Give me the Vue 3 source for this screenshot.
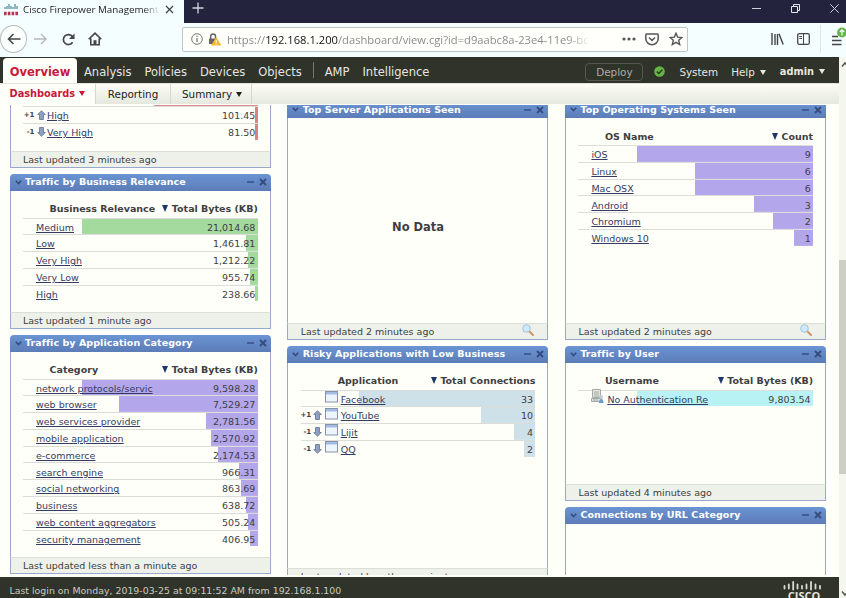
<script setup>
// --- Navigation ---
const menu = ['Analysis', 'Policies', 'Devices', 'Objects']

// --- Dashboard widgets, one list per column ---
// bar is the width of the coloured bar in px
const columns = [
  [
    {
      title: '',
      color: 'red',
      rows: [
        { name: '', value: '', bar: 104 },
        { rank: '+1', name: 'High', value: '101.45', bar: 3 },
        { rank: '-1', name: 'Very High', value: '81.50', bar: 3 },
      ],
      updated: '3 minutes ago',
      size: 'w-first',
    },
    {
      title: 'Traffic by Business Relevance',
      color: 'green',
      head: ['Business Relevance', 'Total Bytes (KB)'],
      rows: [
        { name: 'Medium', value: '21,014.68', bar: 176 },
        { name: 'Low', value: '1,461.81', bar: 12 },
        { name: 'Very High', value: '1,212.22', bar: 10 },
        { name: 'Very Low', value: '955.74', bar: 8 },
        { name: 'High', value: '238.66', bar: 3 },
      ],
      updated: '1 minute ago',
      size: 'w-relevance',
    },
    {
      title: 'Traffic by Application Category',
      color: 'purple',
      head: ['Category', 'Total Bytes (KB)'],
      rows: [
        { name: 'network protocols/servic', value: '9,598.28', bar: 176 },
        { name: 'web browser', value: '7,529.27', bar: 139 },
        { name: 'web services provider', value: '2,781.56', bar: 52 },
        { name: 'mobile application', value: '2,570.92', bar: 47 },
        { name: 'e-commerce', value: '2,174.53', bar: 40 },
        { name: 'search engine', value: '966.31', bar: 19 },
        { name: 'social networking', value: '863.69', bar: 17 },
        { name: 'business', value: '638.72', bar: 12 },
        { name: 'web content aggregators', value: '505.24', bar: 10 },
        { name: 'security management', value: '406.95', bar: 8 },
      ],
      updated: 'less than a minute ago',
      size: 'w-category',
    },
  ],
  [
    { title: 'Top Server Applications Seen', empty: 'No Data', updated: '2 minutes ago', search: true, size: 'w-top' },
    {
      title: 'Risky Applications with Low Business',
      color: 'blue',
      head: ['Application', 'Total Connections'],
      icon: 'app',
      rows: [
        { name: 'Facebook', value: '33', bar: 176 },
        { rank: '+1', name: 'YouTube', value: '10', bar: 54 },
        { rank: '-1', name: 'Lijit', value: '4', bar: 21 },
        { rank: '-1', name: 'QQ', value: '2', bar: 11 },
      ],
      updated: 'less than a minute ago',
      size: 'w-risky',
    },
  ],
  [
    {
      title: 'Top Operating Systems Seen',
      color: 'purple',
      head: ['OS Name', 'Count'],
      rows: [
        { name: 'iOS', value: '9', bar: 176 },
        { name: 'Linux', value: '6', bar: 118 },
        { name: 'Mac OSX', value: '6', bar: 118 },
        { name: 'Android', value: '3', bar: 59 },
        { name: 'Chromium', value: '2', bar: 40 },
        { name: 'Windows 10', value: '1', bar: 19 },
      ],
      updated: '2 minutes ago',
      search: true,
      size: 'w-top',
    },
    {
      title: 'Traffic by User',
      color: 'cyan',
      head: ['Username', 'Total Bytes (KB)'],
      icon: 'user',
      rows: [{ name: 'No Authentication Re', value: '9,803.54', bar: 176 }],
      updated: '4 minutes ago',
      size: 'w-user',
    },
    { title: 'Connections by URL Category', updated: '4 minutes ago', size: 'w-top' },
  ],
]
</script>

<template>
  <div class="window">
    <div class="tabbar">
      <div class="tab">
        <svg class="favicon" width="15" height="12" viewBox="0 0 15 12">
          <path d="M1 3v2M3 2v3M5 0v5M7 2v3M9 3v2M11 0v5M13 2v3" stroke="#3c7f8d" stroke-width="1.1" />
          <path d="M0 9.500h14.500" stroke="#b73550" stroke-width="3.600" stroke-dasharray="2.600 1.200" />
        </svg>
        <span class="tab-title">Cisco Firepower Management C</span>
        <svg width="9" height="9" viewBox="0 0 9 9"><path d="M1 1l7 7M8 1L1 8" stroke="#444" stroke-width="1.3" /></svg>
      </div>
      <svg class="plus" width="12" height="12" viewBox="0 0 12 12"><path d="M6 0.5v11M.5 6h11" stroke="#d5d5df" stroke-width="1.3" /></svg>
      <div class="controls">
        <svg width="9" height="10" viewBox="0 0 9 10"><path d="M0 4.5h9" stroke="#cfcfda" /></svg>
        <svg width="9" height="9" viewBox="0 0 9 9"><path d="M.5 2.5h6v6h-6zM2.5 2.5v-2h6v6h-2" fill="none" stroke="#e4e4ec" /></svg>
        <svg width="9" height="9" viewBox="0 0 9 9"><path d="M.3.3l8.4 8.4M8.7.3L.3 8.7" stroke="#cfcfda" /></svg>
      </div>
    </div>

    <div class="toolbar">
      <div class="back">
        <svg width="14" height="12" viewBox="0 0 14 12"><path d="M13.5 6H1.5M6.5 1L1.5 6l5 5" fill="none" stroke="#454545" stroke-width="1.6" /></svg>
      </div>
      <svg class="forward" width="13" height="12" viewBox="0 0 13 12"><path d="M0 6h11.5M7 1l5 5-5 5" fill="none" stroke="#b4b8b8" stroke-width="1.4" /></svg>
      <svg class="reload" width="13" height="13" viewBox="0 0 13 13">
        <path d="M10.6 9.2A5 5 0 1 1 10.4 3.6" fill="none" stroke="#454545" stroke-width="1.7" />
        <path d="M12.5.5V6H7z" fill="#454545" />
      </svg>
      <svg class="home" width="14" height="14" viewBox="0 0 14 14">
        <path d="M.7 7.3L7 1.2l6.3 6.1M2.8 6.5v6.3h8.4V6.5" fill="none" stroke="#454545" stroke-width="1.6" />
        <path d="M5.5 12.5V8.2h3v4.3z" fill="#454545" />
      </svg>
      <div class="urlbar">
        <svg width="12" height="12" viewBox="0 0 12 12">
          <circle cx="6" cy="6" r="5.3" fill="none" stroke="#777" />
          <path d="M6 5v4M6 2.8v1.3" stroke="#777" stroke-width="1.3" />
        </svg>
        <svg class="lock" width="14" height="13" viewBox="0 0 14 13">
          <path d="M2.7 6V3.4a2.4 2.4 0 0 1 4.8 0V6" fill="none" stroke="#666" stroke-width="1.5" />
          <path d="M1 5.5h7.5V11H1z" fill="#666" />
          <path d="M8.2 4l5.2 8.5H3z" fill="#f3b927" />
          <path d="M8.2 7v3M8.2 10.7v1" stroke="#fff" />
        </svg>
        <span class="url">https://<b>192.168.1.200</b>/dashboard/view.cgi?id=d9aabc8a-23e4-11e9-bc</span>
        <svg class="dots" width="14" height="4" viewBox="0 0 14 4">
          <circle cx="2" cy="2" r="1.600" fill="#555" />
          <circle cx="7" cy="2" r="1.600" fill="#555" />
          <circle cx="12" cy="2" r="1.600" fill="#555" />
        </svg>
        <svg class="pocket" width="14" height="13" viewBox="0 0 14 13">
          <path d="M1.8 1h10.4q1 0 1 1v3.5a6.2 6.2 0 0 1-12.4 0V2q0-1 1-1zM4 4.5l3 3 3-3" fill="none" stroke="#555" stroke-width="1.5" />
        </svg>
        <svg width="14" height="14" viewBox="0 0 14 14">
          <path d="M7 1.2l1.7 3.9 4.2.4-3.2 2.8 1 4.2L7 10.3l-3.7 2.2 1-4.2L1.1 5.5l4.2-.4z" fill="none" stroke="#555" stroke-width="1.4" />
        </svg>
      </div>
      <svg class="library" width="13" height="12" viewBox="0 0 13 12"><path d="M1 0v12M4 1v11M6.5 1v11M8 .8l4.2 10.7" stroke="#454545" stroke-width="1.4" fill="none" /></svg>
      <svg width="13" height="12" viewBox="0 0 13 12">
        <rect x=".7" y=".7" width="11.6" height="10.6" rx="1.5" fill="none" stroke="#454545" stroke-width="1.3" />
        <path d="M6.5 1v10M2.3 3.5H5M2.3 5.5H5" stroke="#454545" />
      </svg>
      <div class="hamburger">
        <svg width="14" height="30" viewBox="0 0 14 30">
          <path d="M0 11.5h6M0 15.5h9.5M0 19.5h9.5" stroke="#454545" stroke-width="1.5" />
          <circle cx="10" cy="7.5" r="4.9" fill="#62b547" />
          <path d="M10 10.5V5M7.800 7L10 4.800 12.200 7" fill="none" stroke="#fff" stroke-width="1.1" />
        </svg>
      </div>
    </div>

    <div class="viewport">
      <div class="page">
        <nav class="menu">
          <span class="active">Overview</span>
          <span v-for="item in menu" :key="item" class="item">{{ item }}</span>
          <i class="sep"></i>
          <span class="item">AMP</span>
          <span class="item">Intelligence</span>
          <div class="right">
            <span class="deploy">Deploy</span>
            <svg class="ok" width="11" height="11" viewBox="0 0 11 11">
              <circle cx="5.5" cy="5.5" r="5.3" fill="#65b544" />
              <path d="M2.8 5.5l2 2 3.5-3.7" fill="none" stroke="#26391b" stroke-width="1.5" />
            </svg>
            <span class="system">System</span>
            <span class="help">Help<i class="caret"></i></span>
            <b class="admin">admin<i class="caret"></i></b>
          </div>
        </nav>
        <nav class="submenu">
          <b class="dash">Dashboards<i class="caret"></i></b>
          <span class="report">Reporting</span>
          <span class="summary">Summary<i class="caret"></i></span>
        </nav>

        <main class="board">
          <div v-for="(column, c) in columns" :key="c" class="column">
            <section v-for="widget in column" :key="widget.title" :class="['widget', widget.size]">
              <header v-if="widget.title">
                <svg width="7" height="5" viewBox="0 0 7 5"><path d="M.8.8l2.7 2.7L6.2.8" fill="none" stroke="#344b80" stroke-width="1.6" /></svg>
                <h2>{{ widget.title }}</h2>
                <svg width="20" height="8" viewBox="0 0 20 8">
                  <path d="M0 4h7" stroke="#344b80" stroke-width="1.4" />
                  <path d="M13 1l6 6M19 1l-6 6" stroke="#344b80" stroke-width="1.8" />
                </svg>
              </header>
              <div :class="['body', widget.icon]">
                <div v-if="widget.head" class="head">
                  <span class="label">{{ widget.head[0] }}</span>
                  <i class="sort"></i>
                  <span class="total">{{ widget.head[1] }}</span>
                </div>
                <div
                  v-for="row in widget.rows"
                  :key="row.name"
                  :class="['row', widget.color]"
                  :style="{ backgroundSize: row.bar + 'px 100%' }"
                >
                  <span :class="['rank', { trend: row.rank }]">
                    {{ row.rank }}
                    <svg v-if="row.rank" :class="{ down: row.rank === '-1' }" width="9" height="10" viewBox="0 0 9 10">
                      <path d="M4.5.7L8.3 4.5H6.5v5h-4v-5H.7z" fill="#8f9fc2" stroke="#63718f" stroke-width=".8" />
                    </svg>
                  </span>
                  <svg v-if="widget.icon === 'app'" class="row-icon" width="13" height="12" viewBox="0 0 13 12">
                    <rect x=".5" y=".5" width="12" height="10.5" fill="#eef4fc" stroke="#8792ad" />
                    <path d="M1 1h11v2.5H1z" fill="#a3bce4" />
                  </svg>
                  <svg v-if="widget.icon === 'user'" class="row-icon" width="13" height="15" viewBox="0 0 13 15">
                    <path d="M1.5.5h8v8h-8zM.5 9.500h10v3H.5z" fill="#e1e5e1" stroke="#a5aaa8" />
                    <path d="M3 3h5M3 5h5M3 7h5M2 11h5" stroke="#a5aaa8" />
                    <circle cx="10" cy="8" r="2" fill="#c5cbd0" />
                    <path d="M8 14q0-4 2.200-4t2.300 4z" fill="#6e9ad2" />
                  </svg>
                  <a>{{ row.name }}</a>
                  <span class="value">{{ row.value }}</span>
                </div>
                <p v-if="widget.empty" class="empty">{{ widget.empty }}</p>
              </div>
              <footer>
                <span>Last updated {{ widget.updated }}</span>
                <svg v-if="widget.search" width="12" height="12" viewBox="0 0 12 12">
                  <path d="M7 7l4 4" stroke="#cf9560" stroke-width="2" stroke-linecap="round" />
                  <circle cx="4.5" cy="4.5" r="3.8" fill="#cfe8fb" stroke="#a0c2df" />
                </svg>
              </footer>
            </section>
          </div>
        </main>

        <div class="status">
          <span>Last login on Monday, 2019-03-25 at 09:11:52 AM from 192.168.1.100</span>
          <div class="logo">
            <svg width="40" height="10" viewBox="0 0 40 10">
              <path d="M1.5 5v2.5M5.8 3.5v4M10.2 1v7.5M14.5 3.5v4M19 5v2.5M23.5 3.5v4M28 1v7.5M32.5 3.5v4M37 5v2.5" stroke="#d8dad4" stroke-width="1.8" stroke-linecap="round" />
            </svg>
            <b>CISCO</b>
          </div>
        </div>
      </div>
      <div class="scrollbar">
        <svg width="7" height="7" viewBox="0 0 7 7"><path d="M3 5.5L6 2l3 3.5" fill="none" stroke="#555" stroke-width="1.5" /></svg>
        <div class="thumb"></div>
        <svg width="7" height="7" viewBox="0 0 7 7"><path d="M3 1.5L6 5l3-3.5" fill="none" stroke="#555" stroke-width="1.5" /></svg>
      </div>
    </div>
  </div>
</template>

<style>
body {
  overflow: hidden;
}
</style>

<style scoped>
* {
  box-sizing: border-box;
}
.window {
  width: 846px;
  height: 598px;
  display: flex;
  flex-direction: column;
  overflow: hidden;
  background: #fffffa;
  font-family: 'DejaVu Sans', Verdana, sans-serif;
  font-size: 9.5px;
  color: #3e3e42;
  white-space: nowrap;
}
svg {
  display: block;
  flex: none;
}

/* --- Browser chrome --- */
.tabbar {
  display: flex;
  height: 23px;
  flex: none;
  background: #23233d;
}
.tab {
  width: 184px;
  display: flex;
  align-items: center;
  padding: 0 10px 4px 4px;
  background: #f4fdff;
  font-family: 'Open Sans', sans-serif;
  font-size: 9.8px;
  color: #222;
}
.tab-title {
  width: 138px;
  margin: 0 5px 0 4px;
  overflow: hidden;
  mask-image: linear-gradient(90deg, #000 88%, transparent);
}
.plus {
  margin: 2px 0 0 8px;
}
.controls {
  display: flex;
  gap: 30px;
  margin: 4px 7px 0 auto;
}
.toolbar {
  display: flex;
  align-items: center;
  height: 34px;
  flex: none;
  padding-bottom: 2px;
  background: #f4fdff;
}
.back {
  display: flex;
  align-items: center;
  justify-content: center;
  width: 28px;
  height: 28px;
  border: 1px solid #b9bcb9;
  border-radius: 50%;
  background: #fbfffd;
}
.forward {
  margin-left: 7px;
}
.reload {
  margin-left: 15px;
}
.home {
  margin-left: 13px;
}
.urlbar {
  display: flex;
  align-items: center;
  width: 506px;
  height: 25px;
  margin-left: 80px;
  padding: 0 4px 0 8px;
  border: 1px solid #b9c6ca;
  border-radius: 2px;
  background: #fffffb;
}
.lock {
  margin-left: 5px;
}
.url {
  width: 366px;
  margin-left: 5px;
  overflow: hidden;
  font-family: 'Open Sans', sans-serif;
  font-size: 11.2px;
  color: #8b8b8b;
  mask-image: linear-gradient(90deg, #000 93%, transparent);
}
.url b {
  font-weight: 400;
  color: #111;
}
.dots {
  margin-left: 30px;
}
.pocket {
  margin: 0 10px 0 9px;
}
.library {
  margin: 0 13px 0 83px;
}
.hamburger {
  height: 28px;
  margin-left: 10px;
  padding-left: 11px;
  border-left: 1px solid #dde5e6;
}

/* --- Page --- */
.viewport {
  display: flex;
  flex: 1;
  min-height: 0;
}
.page {
  width: 839px;
  display: flex;
  flex-direction: column;
}
.scrollbar {
  width: 7px;
  display: flex;
  flex-direction: column;
  padding: 4px 0 1px;
  background: #f5f7ee;
}
.thumb {
  height: 214px;
  margin: 192px 0 auto;
  background: #cdcfc5;
}
.menu {
  display: flex;
  align-items: center;
  height: 26px;
  flex: none;
  background: #303329;
  font-size: 11.5px;
  color: #e6e7e2;
}
.active {
  width: 74px;
  height: 25px;
  margin: 1px 0 0 3px;
  border-radius: 4px 4px 0 0;
  background: #fffffa;
  line-height: 28px;
  text-align: center;
  font-weight: bold;
  color: #c8183c;
}
.item {
  margin: 3px 6px 0 7px;
}
.sep {
  width: 1px;
  height: 16px;
  margin: 0 4px 0 5px;
  background: #777970;
}
.right {
  display: flex;
  align-items: center;
  margin-left: auto;
  padding: 3px 14px 0 0;
  font-size: 10.4px;
}
.deploy {
  width: 58px;
  height: 18px;
  border: 1px solid #55574e;
  border-radius: 4px;
  line-height: 16px;
  text-align: center;
  color: #abada6;
}
.ok {
  margin: 0 14px 0 11px;
}
.help {
  margin: 0 14px 0 13px;
}
.admin {
  font-size: 9.8px;
}
.caret {
  display: inline-block;
  margin-left: 5px;
  border: 3px solid transparent;
  border-top: 5px solid currentColor;
  border-bottom: 0;
  vertical-align: 1px;
}
.submenu {
  display: flex;
  height: 21px;
  flex: none;
  border-top: 1px solid #e3e5dc;
  background: linear-gradient(#fdfdf7, #e4e8dd);
  font-size: 10.4px;
  line-height: 20px;
  color: #222;
}
.dash {
  width: 96px;
  padding-left: 9.5px;
  border-right: 1px solid #d6d8cf;
  background: #fffffa;
  font-size: 9.8px;
  color: #c8183c;
}
.dash .caret {
  margin-left: 4px;
}
.report {
  width: 75px;
  border-right: 1px solid #d6d8cf;
  text-align: center;
}
.summary {
  width: 81px;
  padding-left: 11px;
  border-right: 1px solid #d6d8cf;
}
.summary .caret {
  margin-left: 4px;
}

/* --- Dashboard --- */
.board {
  display: flex;
  gap: 16.5px;
  height: 470px;
  flex: none;
  margin: 1px 0 2px;
  padding-left: 9.5px;
  overflow: hidden;
}
.column {
  display: flex;
  flex-direction: column;
  flex: none;
  gap: 6.5px;
  width: 261.2px;
  margin-top: -3.5px;
}
.column:first-child {
  margin-top: -15.6px;
}
.widget {
  display: flex;
  flex-direction: column;
  flex: none;
}
.w-first {
  height: 78.1px;
}
.w-relevance {
  height: 154.5px;
}
.w-category {
  height: 238.5px;
}
.w-top {
  height: 238px;
}
.w-risky {
  height: 238.5px;
}
.w-user {
  height: 154.5px;
}
header {
  display: flex;
  align-items: center;
  height: 16.5px;
  flex: none;
  padding: 0 4px 0 5px;
  border-radius: 4px 4px 0 0;
  background: linear-gradient(#6a94d3, #5c7cb7);
}
h2 {
  flex: 1;
  margin: 0 0 0 3.5px;
  font-size: 9.5px;
  line-height: 16px;
  letter-spacing: 0.06px;
  color: #fff;
}
.body {
  flex: 1;
  min-height: 0;
  padding: 0 11.9px 0 12.5px;
  border: solid #9aa9cb;
  border-width: 0 1px;
}
.head {
  display: flex;
  align-items: center;
  height: 27px;
  padding: 9px 0 0 26.5px;
  font-weight: bold;
}
.app .head {
  padding-left: 37px;
}
.sort {
  margin: 0 3.5px 0 auto;
  border: 3.5px solid transparent;
  border-top: 7px solid #1d3768;
  border-bottom: 0;
}
.row {
  display: flex;
  align-items: center;
  height: 16.8px;
  padding-right: 2.5px;
  border-top: 1px solid #dcdcd8;
  background: linear-gradient(var(--bar), var(--bar)) right / 0 no-repeat;
}
.red {
  --bar: #dc8083;
}
.green {
  --bar: #a4da9e;
}
.purple {
  --bar: #b4a6eb;
}
.blue {
  --bar: #cee0e8;
}
.cyan {
  --bar: #b9f2f4;
}
.rank {
  display: flex;
  align-items: center;
  justify-content: flex-end;
  gap: 2px;
  width: 13px;
  font-size: 7px;
  font-weight: bold;
}
.rank.trend,
.app .rank {
  width: 24px;
  padding-right: 1.5px;
}
.app .rank {
  padding-right: 2.5px;
}
.rank svg.down {
  transform: rotate(180deg);
}
.row-icon {
  margin: -3px 3px 0 0;
}
a {
  padding-top: 1.5px;
  text-decoration: underline;
  color: #343c62;
}
.value {
  margin-left: auto;
  padding-top: 1.5px;
}
.empty {
  margin: 102px 0 0;
  text-align: center;
  font-size: 11.5px;
  font-weight: bold;
}
footer {
  display: flex;
  align-items: center;
  justify-content: space-between;
  height: 17px;
  flex: none;
  padding: 1px 13px 0 12.5px;
  border: 1px solid #9aa9cb;
  border-top-color: #dcdfd6;
  background: #edf1e9;
}
footer svg {
  margin-top: -3px;
}
.status {
  display: flex;
  flex: 1;
  min-height: 0;
  justify-content: space-between;
  padding: 0 14px 0 9.5px;
  overflow: hidden;
  background: #303329;
  line-height: 28px;
  font-size: 9.4px;
  color: #c9cbc5;
}
.logo {
  width: 42px;
  padding-top: 4px;
  text-align: center;
  font-family: 'Open Sans', sans-serif;
  font-size: 11px;
  line-height: 10px;
  color: #e3e5df;
}
</style>
